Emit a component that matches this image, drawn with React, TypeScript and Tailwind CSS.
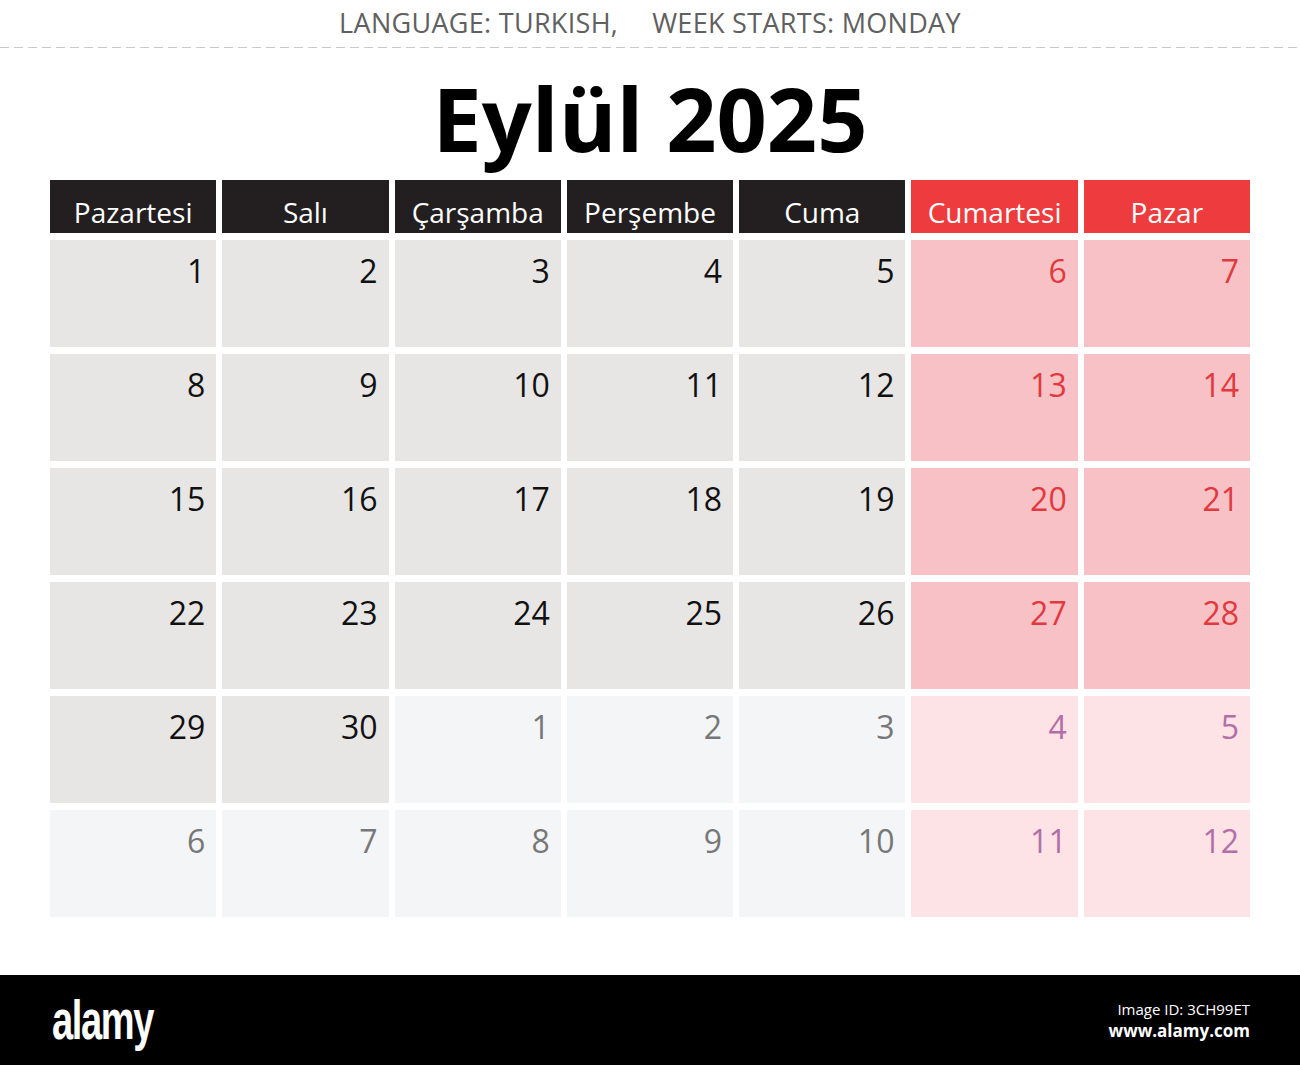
import React from "react";

// September 2025, week starts Monday, Turkish labels
const days = ["Pazartesi", "Salı", "Çarşamba", "Perşembe", "Cuma", "Cumartesi", "Pazar"];

type Cell = { n: number; current: boolean };

const buildCells = (): Cell[] => {
    const cells: Cell[] = [];
    for (let d = 1; d <= 30; d++) cells.push({ n: d, current: true });
    let next = 1;
    while (cells.length < 42) cells.push({ n: next++, current: false });
    return cells;
};

const cellClass = (weekend: boolean, current: boolean) => {
    if (current) return weekend ? "bg-[#f8c1c6] text-[#e0393e]" : "bg-[#e7e6e5] text-[#111111]";
    return weekend ? "bg-[#fde3e6] text-[#b36ea8]" : "bg-[#f4f5f7] text-[#777777]";
};

export default function App() {
    const cells = buildCells();

    return (
        <div className="w-[1300px] h-[1065px] bg-white flex flex-col font-['Open_Sans',sans-serif]">
            {/* Top meta line */}
            <div className="h-[47px] pt-[5px] text-center text-[27px] leading-[36px] tracking-[0.3px] text-[#606060]">
                <span>LANGUAGE: TURKISH,</span>
                <span className="ml-[34px]">WEEK STARTS: MONDAY</span>
            </div>
            <div className="h-px bg-[linear-gradient(to_right,#c9c9c9_9px,transparent_9px)] bg-[length:14px_1px]" />

            {/* Month title */}
            <h1 className="mt-[26px] text-center text-[88px] leading-none font-bold text-black">
                Eylül 2025
            </h1>

            {/* Calendar grid */}
            <div className="mt-[18px] px-[50px] grid grid-cols-7 gap-x-[6px] gap-y-[7px]">
                {days.map((day, i) => (
                    <div
                        key={day}
                        className={`h-[53px] pt-[11px] text-center text-[28px] leading-[42px] text-white ${
                            i >= 5 ? "bg-[#ee3b3e]" : "bg-[#231f20]"
                        }`}
                    >
                        {day}
                    </div>
                ))}

                {cells.map((cell, i) => (
                    <div
                        key={i}
                        className={`h-[107px] pt-[9px] pr-[11px] text-right text-[32px] leading-[43px] ${cellClass(
                            i % 7 >= 5,
                            cell.current
                        )}`}
                    >
                        {cell.n}
                    </div>
                ))}
            </div>

            {/* Footer bar */}
            <div className="mt-auto h-[90px] bg-black px-[50px] flex items-center justify-between">
                <div className="w-[110px] pl-[2px] overflow-visible">
                    <span className="inline-block origin-left scale-x-[0.68] text-[56px] leading-none font-bold tracking-[-2px] text-white font-['Liberation_Sans',sans-serif]">
                        alamy
                    </span>
                </div>
                <div className="text-right text-white leading-[22px]">
                    <div className="text-[15px]">Image ID: 3CH99ET</div>
                    <div className="text-[17px] font-bold">www.alamy.com</div>
                </div>
            </div>
        </div>
    );
}
